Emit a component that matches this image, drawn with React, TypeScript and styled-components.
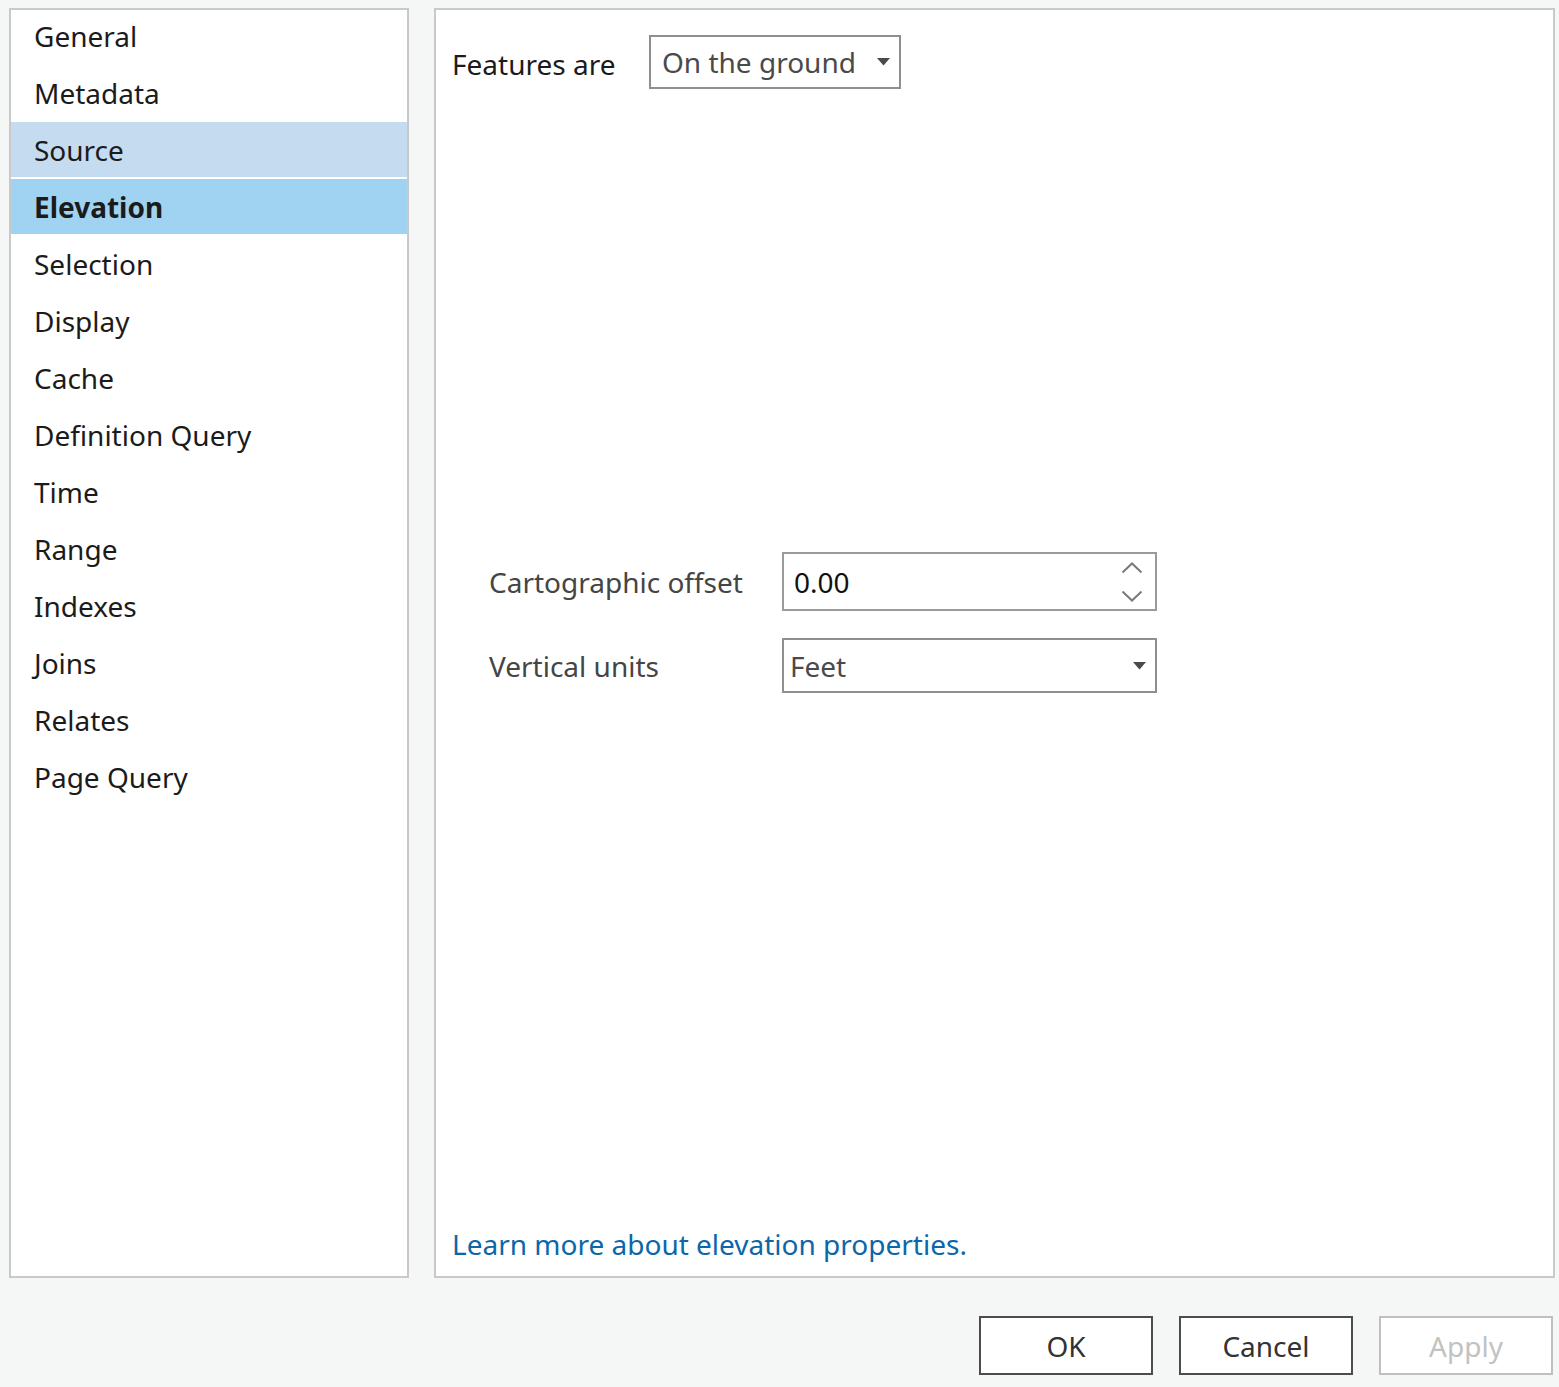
import { FC } from "react";
import styled, { createGlobalStyle } from "styled-components";

const GlobalStyle = createGlobalStyle`
  html, body {
    margin: 0;
    padding: 0;
    background: #f5f7f6;
  }
  body {
    font-family: "Noto Sans", "Open Sans", sans-serif;
    color: #1b1b1b;
  }
`;

const pages = [
  "General",
  "Metadata",
  "Source",
  "Elevation",
  "Selection",
  "Display",
  "Cache",
  "Definition Query",
  "Time",
  "Range",
  "Indexes",
  "Joins",
  "Relates",
  "Page Query",
];

type NavState = "normal" | "hover" | "selected";

const navState = (name: string): NavState => {
  if (name === "Elevation") return "selected";
  if (name === "Source") return "hover";
  return "normal";
};

const Caret: FC = () => (
  <svg width="13" height="8" viewBox="0 0 13 8">
    <path d="M0 0 H13 L6.5 7.5 Z" fill="#4a4a4a" />
  </svg>
);

const Chevron: FC<{ up?: boolean }> = ({ up }) => (
  <svg width="22" height="12" viewBox="0 0 22 12">
    <path
      d={up ? "M1.5 10.5 L11 1.5 L20.5 10.5" : "M1.5 1.5 L11 10.5 L20.5 1.5"}
      fill="none"
      stroke="#7a7a7a"
      strokeWidth="2"
    />
  </svg>
);

export default function App() {
  return (
    <>
      <GlobalStyle />
      <StRoot>
        <StMain>
          <StNav>
            <StNavList>
              {pages.map((p) => (
                <StNavItem key={p} $state={navState(p)}>
                  {p}
                </StNavItem>
              ))}
            </StNavList>
          </StNav>
          <StPanel>
            <StTopRow>
              <StTopLabel>Features are</StTopLabel>
              <StSelect $width={252} $height={54} $pad={11}>
                <span>On the ground</span>
                <Caret />
              </StSelect>
            </StTopRow>
            <StForm>
              <StFormRow>
                <StFieldLabel>Cartographic offset</StFieldLabel>
                <StSpinner>
                  <StSpinValue>0.00</StSpinValue>
                  <StSpinButtons>
                    <Chevron up />
                    <Chevron />
                  </StSpinButtons>
                </StSpinner>
              </StFormRow>
              <StFormRow>
                <StFieldLabel>Vertical units</StFieldLabel>
                <StSelect $width={375} $height={55} $pad={6}>
                  <span>Feet</span>
                  <Caret />
                </StSelect>
              </StFormRow>
            </StForm>
            <StSpacer />
            <StLink href="#">Learn more about elevation properties.</StLink>
          </StPanel>
        </StMain>
        <StFooter>
          <StButton>OK</StButton>
          <StButton>Cancel</StButton>
          <StButton $disabled>Apply</StButton>
        </StFooter>
      </StRoot>
    </>
  );
}

const StRoot = styled.div`
  width: 1559px;
  height: 1387px;
  box-sizing: border-box;
  padding: 8px 4px 0 9px;
  display: flex;
  flex-direction: column;
`;

const StMain = styled.div`
  display: flex;
  gap: 25px;
  height: 1270px;
`;

const StNav = styled.div`
  width: 400px;
  box-sizing: border-box;
  border: 2px solid #c9c9c9;
  background: #fff;
  overflow: hidden;
`;

const StNavList = styled.ul`
  list-style: none;
  margin: -2px 0 0;
  padding: 0;
`;

const StNavItem = styled.li<{ $state: NavState }>`
  height: 55px;
  margin-bottom: 2px;
  display: flex;
  align-items: center;
  padding: 1px 0 0 23px;
  box-sizing: border-box;
  font-size: 28px;
  color: #1b1b1b;
  font-weight: ${(p) => (p.$state === "selected" ? 700 : 400)};
  background: ${(p) =>
    p.$state === "selected"
      ? "#a0d3f1"
      : p.$state === "hover"
      ? "#c5dbef"
      : "transparent"};
`;

const StPanel = styled.div`
  flex: 1;
  box-sizing: border-box;
  border: 2px solid #c9c9c9;
  background: #fff;
  display: flex;
  flex-direction: column;
  padding: 25px 0 0 16px;
`;

const StTopRow = styled.div`
  display: flex;
  align-items: center;
`;

const StTopLabel = styled.div`
  width: 197px;
  padding-top: 4px;
  font-size: 28px;
  color: #1b1b1b;
`;

const StSelect = styled.div<{ $width: number; $height: number; $pad: number }>`
  width: ${(p) => p.$width}px;
  height: ${(p) => p.$height}px;
  box-sizing: border-box;
  border: 2px solid #8f8f8f;
  display: flex;
  align-items: center;
  justify-content: space-between;
  padding: 0 9px 0 ${(p) => p.$pad}px;
  font-size: 28px;
  color: #4a4a4a;
`;

const StForm = styled.div`
  margin-top: 463px;
  padding-left: 37px;
  display: flex;
  flex-direction: column;
  gap: 27px;
`;

const StFormRow = styled.div`
  display: flex;
  align-items: center;
`;

const StFieldLabel = styled.div`
  width: 293px;
  font-size: 28px;
  color: #454545;
`;

const StSpinner = styled.div`
  width: 375px;
  height: 59px;
  box-sizing: border-box;
  border: 2px solid #9a9a9a;
  display: flex;
  align-items: center;
  justify-content: space-between;
  padding: 0 12px 0 10px;
`;

const StSpinValue = styled.span`
  font-size: 28px;
  color: #111;
`;

const StSpinButtons = styled.div`
  display: flex;
  flex-direction: column;
  gap: 16px;
`;

const StSpacer = styled.div`
  flex: 1;
`;

const StLink = styled.a`
  font-size: 28px;
  color: #0b67a9;
  text-decoration: none;
  margin-bottom: 13px;
`;

const StFooter = styled.div`
  display: flex;
  justify-content: flex-end;
  gap: 26px;
  padding: 38px 2px 0 0;
`;

const StButton = styled.div<{ $disabled?: boolean }>`
  width: 174px;
  height: 59px;
  box-sizing: border-box;
  border: 2px solid ${(p) => (p.$disabled ? "#bfbfbf" : "#4d4d4d")};
  background: #fff;
  display: flex;
  align-items: center;
  justify-content: center;
  font-size: 28px;
  color: ${(p) => (p.$disabled ? "#c2c2c2" : "#333")};
`;
